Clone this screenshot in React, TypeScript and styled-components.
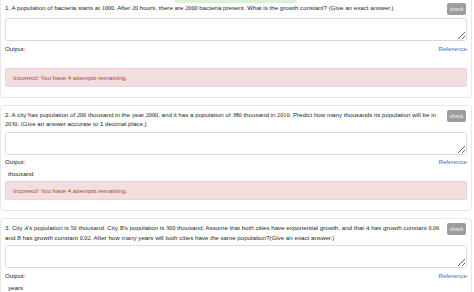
import React from "react";
import styled, { createGlobalStyle } from "styled-components";

const GlobalStyle = createGlobalStyle`
  html, body {
    margin: 0;
    padding: 0;
    background: #ffffff;
    overflow: hidden;
  }
  body {
    font-family: "Liberation Sans", Arial, sans-serif;
    font-size: 6.2px;
    color: #262626;
  }
`;

const Page = styled.div`
  position: relative;
  width: 472px;
  margin-top: -2px;
`;

const Flash = styled.div`
  position: absolute;
  top: -18px;
  left: 175px;
  width: 122px;
  height: 23px;
  background: #dff0d8;
  border-radius: 2px;
`;

const Card = styled.section`
  border: 1px solid #e8e8e8;
  border-radius: 3px;
  padding: 4px 4px 10px 4px;
  margin-bottom: 7px;
  background: #ffffff;
`;

const QuestionRow = styled.div`
  display: flex;
  align-items: flex-start;
  gap: 5px;
`;

const QuestionText = styled.div`
  flex: 1;
  line-height: 9.5px;
  padding-right: 1px;
`;

const MathNum = styled.span<{ $italic?: boolean }>`
  font-family: "Liberation Serif", "Times New Roman", serif;
  font-size: 6.2px;
  color: #1a1a1a;
  font-style: ${(p) => (p.$italic ? "italic" : "normal")};
`;

const CheckButton = styled.button`
  flex: none;
  width: 19px;
  height: 12px;
  margin-right: 1px;
  padding: 0;
  border: none;
  border-radius: 2px;
  background: #9d9d9d;
  color: #f4f4f4;
  font-family: "Liberation Sans", Arial, sans-serif;
  font-size: 5.2px;
  line-height: 12px;
`;

const AnswerBox = styled.textarea`
  display: block;
  box-sizing: border-box;
  width: 100%;
  height: 23px;
  margin: 3px 0 0 0;
  padding: 2px 4px;
  border: 1px solid #d9d9d9;
  border-radius: 3px;
  background: #ffffff;
  resize: vertical;
  font-family: "Liberation Sans", Arial, sans-serif;
  font-size: 6px;
`;

const OutputRow = styled.div`
  display: flex;
  justify-content: space-between;
  margin-top: 2.5px;
  line-height: 9px;
`;

const ReferenceLink = styled.a`
  color: #3574c9;
  text-decoration: none;
`;

const OutputValue = styled.div`
  min-height: 15px;
  line-height: 15px;
  padding-left: 3px;
`;

const Alert = styled.div`
  box-sizing: border-box;
  height: 19px;
  display: flex;
  align-items: center;
  padding: 0 7px;
  background: #f2dede;
  border: 1px solid #ecd3d6;
  border-radius: 2px;
  color: #a94442;
`;

type Q = {
  text: React.ReactNode;
  unit: string;
  alert: boolean;
};

const questions: Q[] = [
  {
    text: (
      <>
        1. A population of bacteria starts at <MathNum>1000</MathNum>. After <MathNum>20</MathNum> hours, there are{" "}
        <MathNum>2000</MathNum> bacteria present. What is the growth constant? (Give an exact answer.)
      </>
    ),
    unit: "",
    alert: true,
  },
  {
    text: (
      <>
        2. A city has population of <MathNum>200</MathNum> thousand in the year <MathNum>2000</MathNum>, and it has a
        population of <MathNum>380</MathNum> thousand in <MathNum>2010</MathNum>. Predict how many thousands its
        population will be in <MathNum>2030</MathNum>. (Give an answer accurate to 1 decimal place.)
      </>
    ),
    unit: "thousand",
    alert: true,
  },
  {
    text: (
      <>
        3. City <MathNum $italic>A</MathNum>'s population is <MathNum>50</MathNum> thousand. City{" "}
        <MathNum $italic>B</MathNum>'s population is <MathNum>300</MathNum> thousand. Assume that both cities have
        exponential growth, and that <MathNum $italic>A</MathNum> has growth constant <MathNum>0.06</MathNum> and{" "}
        <MathNum $italic>B</MathNum> has growth constant <MathNum>0.02</MathNum>. After how many years will both
        cities have the same population?(Give an exact answer.)
      </>
    ),
    unit: "years",
    alert: false,
  },
];

export default function App() {
  return (
    <>
      <GlobalStyle />
      <Page>
        <Flash />
        {questions.map((q, i) => (
          <Card key={i}>
            <QuestionRow>
              <QuestionText>{q.text}</QuestionText>
              <CheckButton type="button">check</CheckButton>
            </QuestionRow>
            <AnswerBox />
            <OutputRow>
              <span>Output:</span>
              <ReferenceLink href="#">Reference</ReferenceLink>
            </OutputRow>
            <OutputValue>{q.unit}</OutputValue>
            {q.alert && <Alert>Incorrect! You have 4 attempts remaining.</Alert>}
          </Card>
        ))}
      </Page>
    </>
  );
}
